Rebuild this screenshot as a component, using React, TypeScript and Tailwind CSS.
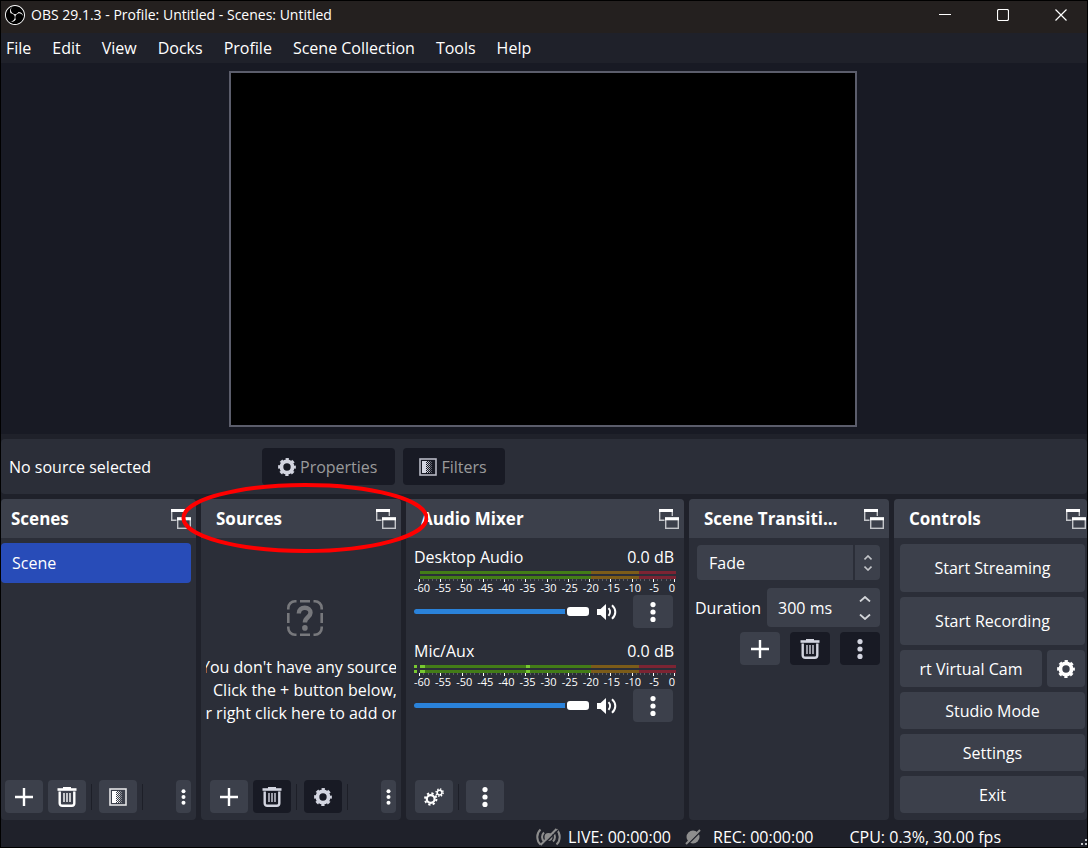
import { useState, ReactNode } from "react";
import { SiObsstudio } from "react-icons/si";

const menuItems = [
  "File",
  "Edit",
  "View",
  "Docks",
  "Profile",
  "Scene Collection",
  "Tools",
  "Help",
];

const GearIcon = ({ size = 18 }: { size?: number }) => (
  <svg width={size} height={size} viewBox="0 0 18 18" fill="none" stroke="currentColor">
    <circle cx="9" cy="9" r="5.6" strokeWidth="3.8" />
    <circle
      cx="9"
      cy="9"
      r="7.6"
      strokeWidth="2.6"
      strokeDasharray="3.2 2.769"
      strokeDashoffset="1.6"
    />
  </svg>
);

const GearsIcon = () => (
  <svg width="20" height="18" viewBox="0 0 20 18" fill="none" stroke="currentColor">
    <circle cx="6.7" cy="11" r="3.9" strokeWidth="2.2" />
    <circle cx="6.7" cy="11" r="5.7" strokeWidth="2" strokeDasharray="2.2 2.277" />
    <circle cx="15.6" cy="4.6" r="2.4" strokeWidth="1.5" />
    <circle cx="15.6" cy="4.6" r="3.6" strokeWidth="1.4" strokeDasharray="1.4 1.427" />
  </svg>
);

const PlusIcon = () => (
  <svg width="18" height="18" viewBox="0 0 18 18" stroke="currentColor" strokeWidth="2.4">
    <path d="M9 0v18M0 9h18" />
  </svg>
);

const TrashIcon = () => (
  <svg width="20" height="20" viewBox="0 0 20 20" fill="none" stroke="currentColor">
    <path d="M0.5 2.5h19" strokeWidth="2.6" />
    <path d="M6 1h8" strokeWidth="2" />
    <path d="M2.7 4.5v11.8a2.5 2.5 0 0 0 2.5 2.5h9.6a2.5 2.5 0 0 0 2.5-2.5V4.5" strokeWidth="2.4" />
    <path d="M7 6v9M10 6v9M13 6v9" strokeWidth="1.4" />
  </svg>
);

const DotsIcon = ({ small = false }: { small?: boolean }) =>
  small ? (
    <svg width="5" height="16" viewBox="0 0 5 16" fill="currentColor">
      <circle cx="2.5" cy="2.3" r="2" />
      <circle cx="2.5" cy="8" r="2" />
      <circle cx="2.5" cy="13.7" r="2" />
    </svg>
  ) : (
    <svg width="6" height="20" viewBox="0 0 6 20" fill="currentColor">
      <circle cx="3" cy="2.6" r="2.6" />
      <circle cx="3" cy="10" r="2.6" />
      <circle cx="3" cy="17.4" r="2.6" />
    </svg>
  );

const FilterIcon = () => (
  <svg width="18" height="18" viewBox="0 0 18 18">
    <rect x="1" y="1" width="16" height="16" fill="none" stroke="currentColor" strokeWidth="1.6" opacity="0.85" />
    <rect x="3" y="3" width="4" height="12" fill="currentColor" />
    {Array.from({ length: 12 }, (_, i) => (
      <g key={i} fill="currentColor">
        <rect x={7 + (i % 2)} y={3 + i} width="1" height="1" />
        <rect x={9 + (i % 2)} y={3 + i} width="1" height="1" opacity="0.8" />
        <rect x={11 + (i % 2)} y={3 + i} width="1" height="1" opacity="0.4" />
      </g>
    ))}
  </svg>
);

const PopOutIcon = () => (
  <svg width="20" height="20" viewBox="0 0 20 20" fill="none" stroke="#c3c5c9">
    <path d="M5.5 11.3H0.7V1h12.6v6" strokeWidth="1.4" />
    <path d="M0 1.5h14" strokeWidth="3" stroke="#fff" />
    <rect x="6.7" y="9" width="12.6" height="10.3" strokeWidth="1.4" />
    <path d="M6 9.8h14" strokeWidth="3" stroke="#fff" />
  </svg>
);

const SpeakerIcon = () => (
  <svg width="20" height="18" viewBox="0 0 20 18" fill="none" stroke="currentColor" strokeWidth="2">
    <path d="M0 6h3.5L9 1v16L3.5 12H0z" fill="currentColor" stroke="none" />
    <path d="M11.5 5.2c2 2.2 2 5.4 0 7.6" />
    <path d="M15 2.2c4.4 3.8 4.4 9.8 0 13.6" />
  </svg>
);

const ToolButton = ({
  label,
  disabled = false,
  className = "w-[38px]",
  children,
}: {
  label: string;
  disabled?: boolean;
  className?: string;
  children: ReactNode;
}) => (
  <button
    type="button"
    aria-label={label}
    disabled={disabled}
    className={`flex h-[33px] shrink-0 items-center justify-center rounded ${
      disabled ? "bg-[#181a24] text-[#d3d5e0]" : "bg-[#3c404b] text-white"
    } ${className}`}
  >
    {children}
  </button>
);

const Separator = () => <div className="mr-0.5 h-[26px] w-px shrink-0 bg-[#1d1f28]" />;

const Dock = ({
  title,
  headerClass = "pl-[15px] pr-[5px]",
  className = "",
  children,
}: {
  title: string;
  headerClass?: string;
  className?: string;
  children: ReactNode;
}) => (
  <section className={`flex min-w-0 flex-col rounded bg-[#2b2e38] ${className}`}>
    <header
      className={`flex h-[39px] shrink-0 items-center justify-between gap-5 rounded-t bg-[#3c404b] ${headerClass}`}
    >
      <h2 className="truncate text-[17px] font-bold">{title}</h2>
      <button type="button" aria-label={`Pop out ${title}`} className="shrink-0">
        <PopOutIcon />
      </button>
    </header>
    {children}
  </section>
);

// Peak blocks are [start, width] pairs along the meter
const VolumeMeter = ({ peaks = [] }: { peaks?: number[][] }) => (
  <svg viewBox="0 0 262 24" className="mt-0.5 block w-full">
    {[0, 5].map(y => (
      <g key={y}>
        <rect x="6" y={y} width="171" height="3" fill="#437c17" />
        <rect x="177" y={y} width="48" height="3" fill="#7c5c19" />
        <rect x="225" y={y} width="37" height="3" fill="#7c2433" />
        {peaks.map(([x, width]) => (
          <rect key={x} x={x} y={y} width={width} height="3" fill="#78c831" />
        ))}
      </g>
    ))}
    {Array.from({ length: 61 }, (_, i) => {
      const x = Math.round(5 + i * 4.25);
      return i % 5 === 0 ? (
        <rect key={i} x={x} y="8" width="1" height="3" fill="#fff" />
      ) : (
        <rect key={i} x={x} y="8" width="1" height="2" fill="#5c5e66" />
      );
    })}
    {Array.from({ length: 13 }, (_, i) => (
      <text
        key={i}
        x={Math.min(8 + i * 21.1, 258)}
        y="21"
        textAnchor="middle"
        fontSize="11"
        fill="#fff"
      >
        {i * 5 - 60}
      </text>
    ))}
  </svg>
);

const MixerChannel = ({ name, peaks }: { name: string; peaks?: number[][] }) => {
  const [volume, setVolume] = useState(100);

  return (
    <div>
      <div className="flex h-6 items-center justify-between pr-0.5">
        <span>{name}</span>
        <span>0.0 dB</span>
      </div>
      <VolumeMeter peaks={peaks} />
      <div className="flex items-center pr-[3px]">
        <input
          type="range"
          aria-label={`${name} volume`}
          value={volume}
          onChange={event => setVolume(Number(event.target.value))}
          className="h-3 min-w-0 flex-1 appearance-none bg-transparent [&::-webkit-slider-runnable-track]:h-[5px] [&::-webkit-slider-runnable-track]:rounded-sm [&::-webkit-slider-runnable-track]:bg-[#2a82da] [&::-webkit-slider-thumb]:-mt-1 [&::-webkit-slider-thumb]:h-[13px] [&::-webkit-slider-thumb]:w-[26px] [&::-webkit-slider-thumb]:appearance-none [&::-webkit-slider-thumb]:rounded-[5px] [&::-webkit-slider-thumb]:border-2 [&::-webkit-slider-thumb]:border-[#2b2e38] [&::-webkit-slider-thumb]:bg-white"
        />
        <button type="button" aria-label={`Mute ${name}`} className="mr-4 ml-1.5">
          <SpeakerIcon />
        </button>
        <ToolButton label={`${name} options`} className="w-10">
          <DotsIcon />
        </ToolButton>
      </div>
    </div>
  );
};

const ControlButton = ({
  className = "h-[37px]",
  children,
}: {
  className?: string;
  children: ReactNode;
}) => (
  <button
    type="button"
    className={`flex shrink-0 items-center justify-center overflow-hidden rounded bg-[#3c404b] whitespace-nowrap ${className}`}
  >
    {children}
  </button>
);

const App = () => {
  const [transition, setTransition] = useState("Fade");
  const [duration, setDuration] = useState("300 ms");

  return (
    <div className="flex min-h-screen flex-col overflow-hidden border border-black bg-[#1f212a] font-['Open_Sans','Noto_Sans',sans-serif] text-base text-white">
      <div className="flex h-8 items-center bg-[#24201f] pb-1 pl-1 text-sm">
        <span className="mr-1.5 flex size-5 items-center justify-center rounded-full bg-black">
          <SiObsstudio size={20} />
        </span>
        <h1 className="flex-1">OBS 29.1.3 - Profile: Untitled - Scenes: Untitled</h1>
        <div className="flex items-center gap-[46px] pr-5">
          <button type="button" aria-label="Minimize">
            <svg width="12" height="12" viewBox="0 0 12 12" stroke="#fff">
              <path d="M0 5.5h12" />
            </svg>
          </button>
          <button type="button" aria-label="Maximize">
            <svg width="12" height="12" viewBox="0 0 12 12" fill="none" stroke="#fff">
              <rect x="0.5" y="0.5" width="11" height="11" rx="1.5" strokeWidth="1.2" />
            </svg>
          </button>
          <button type="button" aria-label="Close">
            <svg width="12" height="12" viewBox="0 0 12 12" stroke="#fff" strokeWidth="1.2">
              <path d="M0.5 0.5l11 11M11.5 0.5l-11 11" />
            </svg>
          </button>
        </div>
      </div>

      <nav className="flex h-[30px] items-center gap-[21px] px-[5px]">
        {menuItems.map(item => (
          <button type="button" key={item}>
            {item}
          </button>
        ))}
      </nav>

      <main className="flex flex-1 flex-col">
        <div className="flex flex-1 items-center justify-center bg-[#181a24] pt-2 pr-0.5 pb-[7px]">
          <div className="aspect-[628/356] w-[628px] max-w-full border-2 border-[#5b5d6b] bg-black" />
        </div>

        <div className="mt-[5px] flex h-[55px] items-center rounded bg-[#2b2e38] pl-2">
          <span className="w-[253px]">No source selected</span>
          <div className="flex gap-2 text-[#9a9a9b]">
            <button
              type="button"
              disabled
              className="flex h-[37px] items-center gap-1 rounded bg-[#181a24] pr-[18px] pl-4"
            >
              <span className="text-[#d3d5e0]">
                <GearIcon />
              </span>
              Properties
            </button>
            <button
              type="button"
              disabled
              className="flex h-[37px] items-center gap-1 rounded bg-[#181a24] pr-[18px] pl-4"
            >
              <span className="text-[#d3d5e0]">
                <FilterIcon />
              </span>
              Filters
            </button>
          </div>
        </div>

        <div className="mt-[5px] grid grid-cols-[195fr_200fr_278fr_200fr_193fr] gap-[5px]">
          <Dock title="Scenes" headerClass="pl-2.5 pr-[5px]">
            <ul className="mt-[5px] mr-[5px] flex-1">
              <li className="flex h-10 items-center rounded bg-[#284cb8] pl-[11px]">Scene</li>
            </ul>
            <div className="flex items-center pr-[5px] pb-[7px] pl-1">
              <div className="flex flex-1 items-center gap-[5px]">
                <ToolButton label="Add scene">
                  <PlusIcon />
                </ToolButton>
                <ToolButton label="Remove scene">
                  <TrashIcon />
                </ToolButton>
                <Separator />
                <ToolButton label="Scene filters">
                  <FilterIcon />
                </ToolButton>
                <Separator />
              </div>
              <ToolButton label="More scene actions" className="w-[15px]">
                <DotsIcon small />
              </ToolButton>
            </div>
          </Dock>

          <Dock title="Sources" className="relative">
            <svg
              width="247"
              height="70"
              viewBox="0 0 247 70"
              fill="none"
              className="pointer-events-none absolute -top-4 -left-5 z-10"
            >
              <ellipse cx="124" cy="35" rx="121.5" ry="33" stroke="#f00" strokeWidth="4" />
            </svg>
            <div className="mx-[5px] flex flex-1 flex-col items-center overflow-hidden pt-[62px] pl-2 text-center leading-[23px] whitespace-nowrap">
              <svg
                width="36"
                height="36"
                viewBox="0 0 36 36"
                fill="none"
                stroke="#77787c"
                strokeWidth="2.6"
              >
                <path d="M1.3 9.5V8a6.7 6.7 0 0 1 6.7-6.7h1.5M13 1.3h10M26.5 1.3H28A6.7 6.7 0 0 1 34.7 8v1.5M34.7 13v10M34.7 26.5V28a6.7 6.7 0 0 1-6.7 6.7h-1.5M23 34.7H13M9.5 34.7H8A6.7 6.7 0 0 1 1.3 28v-1.5M1.3 23V13" />
                <path
                  d="M11.8 13.5c0-3.8 2.6-5.7 6-5.7 3.3 0 5.7 1.9 5.7 4.9 0 4.6-5.6 4.6-5.6 9.8"
                  strokeWidth="4.4"
                />
                <circle cx="17.9" cy="27.9" r="2.8" fill="#77787c" stroke="none" />
              </svg>
              <p className="mt-5">
                You don't have any sources.
                <br />
                Click the + button below,
                <br />
                or right click here to add one.
              </p>
            </div>
            <div className="flex items-center pr-[5px] pb-[7px] pl-[9px]">
              <div className="flex flex-1 items-center gap-[5px]">
                <ToolButton label="Add source">
                  <PlusIcon />
                </ToolButton>
                <ToolButton label="Remove source" disabled>
                  <TrashIcon />
                </ToolButton>
                <Separator />
                <ToolButton label="Source properties" disabled>
                  <GearIcon />
                </ToolButton>
                <Separator />
              </div>
              <ToolButton label="More source actions" className="w-[15px]">
                <DotsIcon small />
              </ToolButton>
            </div>
          </Dock>

          <Dock title="Audio Mixer">
            <div className="flex flex-1 flex-col gap-[11px] px-2 pt-[7px]">
              <MixerChannel name="Desktop Audio" />
              <MixerChannel
                name="Mic/Aux"
                peaks={[
                  [0, 3],
                  [6, 5],
                  [112, 4],
                ]}
              />
            </div>
            <div className="flex items-center gap-[5px] pb-[7px] pl-[9px]">
              <ToolButton label="Advanced audio properties">
                <GearsIcon />
              </ToolButton>
              <Separator />
              <ToolButton label="Audio mixer menu">
                <DotsIcon />
              </ToolButton>
            </div>
          </Dock>

          <Dock title="Scene Transitions">
            <div className="flex flex-col pt-[7px] pr-[9px] pl-1.5">
              <div className="relative ml-0.5">
                <select
                  aria-label="Scene transition"
                  value={transition}
                  onChange={event => setTransition(event.target.value)}
                  className="h-[35px] w-full appearance-none rounded bg-[#3c404b] pr-8 pl-3"
                >
                  <option>Fade</option>
                  <option>Cut</option>
                </select>
                <span className="pointer-events-none absolute inset-y-0 right-0 flex w-[27px] items-center justify-center border-l-2 border-[#2b2e38]">
                  <svg width="8" height="16" viewBox="0 0 8 16" fill="none" stroke="#c3c5c9" strokeWidth="1.6">
                    <path d="M0.5 4.5L4 1l3.5 3.5M0.5 11.5L4 15l3.5-3.5" />
                  </svg>
                </span>
              </div>
              <div className="mt-2 flex items-center gap-1.5">
                <label htmlFor="duration">Duration</label>
                <div className="relative min-w-0 flex-1">
                  <input
                    id="duration"
                    value={duration}
                    onChange={event => setDuration(event.target.value)}
                    className="block h-[39px] w-full rounded bg-[#3c404b] pr-8 pl-[11px]"
                  />
                  <div className="absolute inset-y-0 right-[9px] flex flex-col justify-center gap-3">
                    <button type="button" aria-label="Increase duration">
                      <svg width="12" height="6" viewBox="0 0 12 6" fill="none" stroke="#d3d5d9" strokeWidth="1.8" className="block">
                        <path d="M1 5.5L6 1l5 4.5" />
                      </svg>
                    </button>
                    <button type="button" aria-label="Decrease duration">
                      <svg width="12" height="6" viewBox="0 0 12 6" fill="none" stroke="#d3d5d9" strokeWidth="1.8" className="block">
                        <path d="M1 0.5L6 5l5-4.5" />
                      </svg>
                    </button>
                  </div>
                </div>
              </div>
              <div className="mt-[5px] flex justify-end gap-2.5">
                <ToolButton label="Add transition" className="w-10">
                  <PlusIcon />
                </ToolButton>
                <ToolButton label="Remove transition" disabled className="w-10">
                  <TrashIcon />
                </ToolButton>
                <ToolButton label="Transition properties" disabled className="w-10">
                  <DotsIcon />
                </ToolButton>
              </div>
            </div>
          </Dock>

          <Dock title="Controls" headerClass="pl-[15px] pr-px">
            <div className="flex flex-col gap-[5px] pt-1.5 pr-0.5 pb-[7px] pl-1.5">
              <ControlButton className="h-12">Start Streaming</ControlButton>
              <ControlButton className="h-12">Start Recording</ControlButton>
              <div className="flex gap-[5px]">
                <ControlButton className="h-[37px] min-w-0 flex-1">rt Virtual Cam</ControlButton>
                <ToolButton label="Configure virtual camera" className="h-[37px] w-[38px]">
                  <GearIcon />
                </ToolButton>
              </div>
              <ControlButton>Studio Mode</ControlButton>
              <ControlButton>Settings</ControlButton>
              <ControlButton>Exit</ControlButton>
            </div>
          </Dock>
        </div>
      </main>

      <footer className="relative flex h-[27px] items-center justify-end gap-9 pt-1.5 pr-[86px]">
        <div className="flex items-center gap-3.5">
          <span className="flex items-center gap-[7px]">
            <svg width="25" height="18" viewBox="0 0 25 18" fill="none" stroke="#8e8e8e" strokeWidth="2">
              <path d="M4.5 1.5c-4.3 4-4.3 11 0 15M8 4.5c-2.6 2.5-2.6 6.5 0 9M20.5 1.5c4.3 4 4.3 11 0 15M17 4.5c2.6 2.5 2.6 6.5 0 9" />
              <circle cx="12.5" cy="9" r="4" fill="#8e8e8e" stroke="none" />
              <path d="M6 18L22 2" stroke="#1f212a" strokeWidth="1.6" />
              <path d="M4.5 17L20.5 1" />
            </svg>
            LIVE: 00:00:00
          </span>
          <span className="flex items-center gap-3">
            <svg width="16" height="16" viewBox="0 0 16 16" stroke="#8e8e8e" strokeWidth="2">
              <circle cx="8" cy="8" r="6.5" fill="#8e8e8e" stroke="none" />
              <path d="M2 16L16 2" stroke="#1f212a" strokeWidth="1.6" />
              <path d="M1 15L15 1" />
            </svg>
            REC: 00:00:00
          </span>
        </div>
        <span>CPU: 0.3%, 30.00 fps</span>
        <svg width="6" height="6" viewBox="0 0 6 6" fill="#c3c5c9" className="absolute right-0 bottom-0.5">
          <path d="M0 4h2v2H0zM4 4h2v2H4zM4 0h2v2H4z" />
        </svg>
      </footer>
    </div>
  );
};

export default App;
